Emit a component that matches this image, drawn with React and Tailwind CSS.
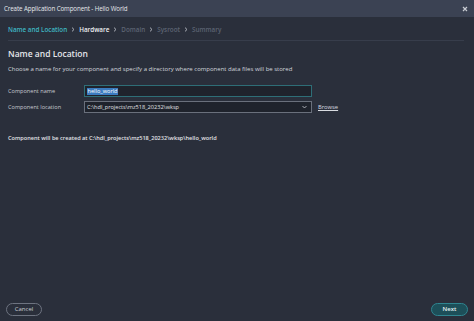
export default function App() {
  const font = { fontFamily: '"Open Sans", "Noto Sans", sans-serif' };
  const Chev = () => (
    <svg width="4" height="5" viewBox="0 0 4 5" className="text-[#b9bdc6]">
      <path d="M1 0.6L3 2.5L1 4.4" stroke="currentColor" strokeWidth="0.9" fill="none" />
    </svg>
  );
  return (
    <div className="w-[474px] h-[321px] bg-[#2a2f3b] flex flex-col text-[#d7dae0] overflow-hidden" style={font}>
      <div className="h-[17px] bg-[#3b4253] flex items-center justify-between pl-[4px] pr-[6px] shrink-0">
        <span className="text-[6.2px] text-[#e6e8ec] tracking-[-0.1px]">Create Application Component - Hello World</span>
        <svg width="6" height="6" viewBox="0 0 6 6" className="text-[#c9ccd3]">
          <path d="M1 1L5 5M5 1L1 5" stroke="currentColor" strokeWidth="1.2" />
        </svg>
      </div>
      <div className="ml-[8px] mr-[10px] h-[24px] pt-[2px] flex items-center gap-[4px] border-b border-[#373d4b] text-[6.3px] font-semibold shrink-0">
        <span className="text-[#3fb6c2]">Name and Location</span>
        <Chev />
        <span className="text-[#eef0f3]">Hardware</span>
        <Chev />
        <span className="text-[#5d6473]">Domain</span>
        <Chev />
        <span className="text-[#5d6473]">Sysroot</span>
        <Chev />
        <span className="text-[#5d6473]">Summary</span>
      </div>
      <div className="flex-1 flex flex-col px-[8px] pt-[7px]">
        <div className="text-[8.5px] font-semibold text-[#e4e6ea] leading-[12px]">Name and Location</div>
        <div className="text-[6px] text-[#d3d6dc] mt-[5px] leading-[8px]">
          Choose a name for your component and specify a directory where component data files will be stored
        </div>
        <div className="mt-[12px] flex items-center h-[12px]">
          <span className="w-[76px] text-[5.6px] text-[#c7cad1]">Component name</span>
          <div className="w-[228px] h-[12px] border border-[#2e6e77] bg-[#1f232c] flex items-center px-[2px]">
            <span className="bg-[#3b7bc0] text-white text-[5.6px] leading-[7px] px-[0.5px]">hello_world</span>
          </div>
        </div>
        <div className="mt-[4px] flex items-center h-[12px]">
          <span className="w-[76px] text-[5.6px] text-[#c7cad1]">Component location</span>
          <div className="w-[228px] h-[12px] border border-[#6a707c] bg-[#1f232c] flex items-center justify-between px-[2px]">
            <span className="text-[5.6px] text-[#e0e2e6]">C:\hdl_projects\mz518_20232\wksp</span>
            <svg width="5" height="4" viewBox="0 0 5 4" className="mr-[2px] text-[#c9ccd3]">
              <path d="M0.5 1L2.5 3L4.5 1" stroke="currentColor" strokeWidth="0.8" fill="none" />
            </svg>
          </div>
          <span className="ml-[6px] text-[5.8px] text-[#d9dce1] underline">Browse</span>
        </div>
        <div className="mt-[21px] text-[5.6px] leading-[8px] font-semibold text-[#e1e3e7]">
          Component will be created at C:\hdl_projects\mz518_20232\wksp\hello_world
        </div>
      </div>
      <div className="flex items-center justify-between px-[6px] pb-[5px]">
        <button className="w-[36px] h-[13px] rounded-full border border-[#6d7380] text-[6px] text-[#c9ccd3] flex items-center justify-center">
          Cancel
        </button>
        <button className="w-[37px] h-[13px] rounded-full border border-[#2f8590] bg-[#1d4f59] text-[6px] font-semibold text-[#e8f3f4] flex items-center justify-center">
          Next
        </button>
      </div>
    </div>
  );
}
